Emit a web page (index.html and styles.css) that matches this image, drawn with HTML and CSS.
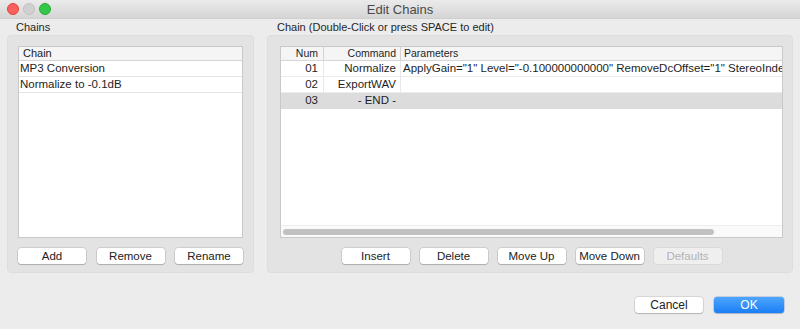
FILE: index.html
```html
<!DOCTYPE html>
<html>
<head>
<meta charset="utf-8">
<link rel="stylesheet" href="styles.css">
</head>
<body>
<div class="window">
  <div class="titlebar">
    <div class="lights">
      <span class="light red"></span>
      <span class="light gray"></span>
      <span class="light green"></span>
    </div>
    <div class="title">Edit Chains</div>
  </div>
  <div class="content">
    <section class="col col-left">
      <div class="label">Chains</div>
      <div class="group group-left">
        <div class="list">
          <div class="lhead">Chain</div>
          <div class="lrow">MP3 Conversion</div>
          <div class="lrow">Normalize to -0.1dB</div>
        </div>
        <div class="btns spread">
          <button class="btn">Add</button>
          <button class="btn">Remove</button>
          <button class="btn">Rename</button>
        </div>
      </div>
    </section>
    <section class="col col-right">
      <div class="label label-right">Chain (Double-Click or press SPACE to edit)</div>
      <div class="group group-right">
        <div class="table">
          <div class="trow thead">
            <div class="c num">Num</div>
            <div class="c cmd">Command</div>
            <div class="c par">Parameters</div>
          </div>
          <div class="trow">
            <div class="c num">01</div>
            <div class="c cmd">Normalize</div>
            <div class="c par">ApplyGain="1" Level="-0.100000000000" RemoveDcOffset="1" StereoIndependent="0"</div>
          </div>
          <div class="trow">
            <div class="c num">02</div>
            <div class="c cmd">ExportWAV</div>
            <div class="c par"></div>
          </div>
          <div class="trow sel">
            <div class="c num">03</div>
            <div class="c cmd">- END -</div>
            <div class="c par"></div>
          </div>
          <div class="tfill"></div>
          <div class="hscroll"><div class="thumb"></div></div>
        </div>
        <div class="btns center">
          <button class="btn">Insert</button>
          <button class="btn">Delete</button>
          <button class="btn">Move Up</button>
          <button class="btn">Move Down</button>
          <button class="btn disabled">Defaults</button>
        </div>
      </div>
    </section>
  </div>
  <div class="footer">
    <button class="btn btn-foot">Cancel</button>
    <button class="btn btn-foot primary">OK</button>
  </div>
</div>
</body>
</html>
```

FILE: styles.css
```css
* { box-sizing: border-box; }
html, body { margin: 0; padding: 0; }
body {
  width: 800px;
  height: 329px;
  overflow: hidden;
  background: #ececec;
  font-family: "Liberation Sans", Arial, sans-serif;
  color: #1e1e1e;
}
.window {
  width: 800px;
  height: 329px;
  background: #ececec;
  display: flex;
  flex-direction: column;
}
.titlebar {
  height: 19px;
  flex: none;
  position: relative;
  background: linear-gradient(#ebebeb, #d5d5d5);
  border-bottom: 1px solid #cfcfcf;
  display: flex;
  align-items: center;
  justify-content: center;
}
.lights {
  position: absolute;
  left: 7px;
  top: 3px;
  display: flex;
  gap: 4px;
}
.light {
  width: 12px;
  height: 12px;
  border-radius: 50%;
  display: block;
}
.red { background: #fc605c; border: 1px solid #e0443e; }
.gray { background: #d0d0d0; border: 1px solid #c2c2c2; }
.green { background: #34c84a; border: 1px solid #27aa35; }
.title {
  font-size: 13px;
  color: #4a4a4a;
}
.content {
  display: flex;
  padding: 0 7px;
  gap: 13px;
}
.col-left { width: 247px; }
.col-right { width: 526px; }
.label {
  height: 16px;
  font-size: 11px;
  color: #262626;
  padding: 2px 0 0 9px;
}
.label-right { padding-left: 10px; }
.group {
  height: 238px;
  background: #e3e3e3;
  border: 1px solid #dddddd;
  border-radius: 4px;
  padding: 10px 10px 0 10px;
}
.group-right { padding: 10px 9px 0 12px; }
.list {
  height: 192px;
  background: #fff;
  border: 1px solid #c9c9c9;
}
.lhead {
  height: 14px;
  font-size: 11px;
  line-height: 13px;
  padding-left: 4px;
  background: #f5f5f5;
  border-bottom: 1px solid #d6d6d6;
  color: #222;
}
.lrow {
  height: 16px;
  font-size: 11.5px;
  line-height: 15px;
  padding-left: 1px;
  border-bottom: 1px solid #e4e4e4;
  white-space: nowrap;
}
.btns {
  display: flex;
  margin-top: 10px;
}
.spread { justify-content: space-between; }
.center { justify-content: center; gap: 10px; }
.btn {
  font-family: "Liberation Sans", Arial, sans-serif;
  font-size: 11.5px;
  color: #222;
  background: #fff;
  border: none;
  border-radius: 3px;
  box-shadow: 0 0 0 0.5px rgba(0,0,0,0.18), 0 1px 1px rgba(0,0,0,0.16);
  width: 68px;
  height: 16px;
  padding: 0;
  line-height: 16px;
  margin: 0;
}
.btn.disabled {
  background: #efefef;
  color: #b3b3b3;
  box-shadow: 0 0 0 0.5px rgba(0,0,0,0.08);
}
.table {
  height: 192px;
  background: #fff;
  border: 1px solid #c9c9c9;
  display: flex;
  flex-direction: column;
  overflow: hidden;
}
.trow {
  height: 16px;
  flex: none;
  display: flex;
  font-size: 11.5px;
  line-height: 15px;
  border-bottom: 1px solid #ececec;
  white-space: nowrap;
}
.thead {
  height: 14px;
  font-size: 10.5px;
  line-height: 13px;
  background: #f5f5f5;
  border-bottom: 1px solid #d6d6d6;
}
.c { overflow: hidden; }
.num {
  width: 43px;
  flex: none;
  text-align: right;
  padding-right: 5px;
  border-right: 1px solid #e8e8e8;
}
.cmd {
  width: 77px;
  flex: none;
  text-align: right;
  padding-right: 4px;
  border-right: 1px solid #e8e8e8;
}
.par {
  flex: 1;
  padding-left: 2px;
  overflow: hidden;
}
.thead .num, .thead .cmd { border-right-color: #d4d4d4; }
.thead .par { padding-left: 3px; }
.sel { background: #dcdcdc; border-bottom-color: #dcdcdc; }
.sel .num, .sel .cmd { border-right-color: #dcdcdc; }
.tfill { flex: 1; }
.hscroll {
  height: 12px;
  flex: none;
  background: #fafafa;
  border-top: 1px solid #ededed;
  padding: 3px 0 0 2px;
}
.thumb {
  width: 431px;
  height: 6px;
  border-radius: 3px;
  background: #c1c1c1;
}
.footer {
  display: flex;
  justify-content: flex-end;
  gap: 11px;
  padding: 24px 16px 0 0;
}
.btn-foot {
  width: 68px;
  height: 16px;
  font-size: 12px;
}
.primary {
  width: 70px;
  color: #fff;
  background: linear-gradient(#4ea5fc, #1a7ff6);
  box-shadow: 0 0 0 0.5px rgba(0,60,160,0.35), 0 1px 1px rgba(0,0,0,0.12);
}
```
